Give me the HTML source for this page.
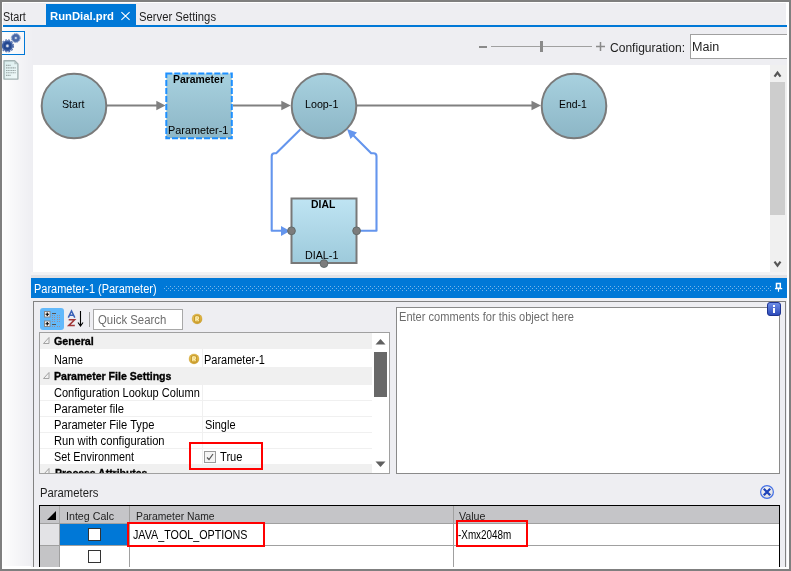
<!DOCTYPE html>
<html><head><meta charset="utf-8"><style>
html,body{margin:0;padding:0;width:791px;height:571px;overflow:hidden;position:relative;background:#7f7f7f;}
.r,.t{position:absolute;}
.t{white-space:nowrap;font-family:"Liberation Sans", sans-serif;}
svg text{font-family:"Liberation Sans",sans-serif;}
</style></head><body>
<div class="r" style="left:0px;top:0px;width:791px;height:571px;background:#7f7f7f;"></div>
<div class="r" style="left:2px;top:2px;width:787px;height:567px;background:#ffffff;"></div>
<div class="r" style="left:3px;top:3px;width:783px;height:22px;background:#eeeef2;"></div>
<div class="r" style="left:3px;top:25px;width:784px;height:2px;background:#0078d7;"></div>
<div class="t" style="left:2.92px;top:11.09px;font-size:12.00px;line-height:12.00px;color:#1e1e1e;transform-origin:0 0;transform:scaleX(0.9006);">Start</div>
<div class="r" style="left:46px;top:4px;width:90px;height:21px;background:#0078d7;"></div>
<div class="t" style="left:50.26px;top:11.26px;font-size:11.80px;line-height:11.80px;color:#fff;transform-origin:0 0;transform:scaleX(0.9574);font-weight:bold;">RunDial.prd</div>
<svg class="r" style="left:119px;top:10px" width="13" height="12" viewBox="119 10 13 12"><path d="M121.4 12.2L129.6 19.9M129.6 12.2L121.4 19.9" stroke="#fff" stroke-width="1.15"/></svg>
<div class="t" style="left:139.00px;top:11.09px;font-size:12.00px;line-height:12.00px;color:#1e1e1e;transform-origin:0 0;transform:scaleX(0.9387);">Server Settings</div>
<div class="r" style="left:3px;top:27px;width:30px;height:539px;background:linear-gradient(to right,#fdfdfd,#eeeef2);"></div>
<div class="r" style="left:2px;top:31px;width:23px;height:24px;border:1px solid #0078d7;border-left:none;box-sizing:border-box;background:rgba(255,255,255,0.25);"></div>
<svg class="r" style="left:2px;top:31px" width="23" height="24" viewBox="2 31 23 24">
<defs><filter id="gb" x="-20%" y="-20%" width="140%" height="140%"><feGaussianBlur stdDeviation="0.5"/></filter></defs>
<g filter="url(#gb)">
<circle cx="15.8" cy="38" r="4.2" fill="#5a78b4"/>
<circle cx="15.8" cy="38" r="4.5" fill="none" stroke="#5a78b4" stroke-width="0.9" stroke-dasharray="1.4 0.95" opacity="0.85"/>
<circle cx="15.8" cy="38" r="2.6" fill="none" stroke="#4866a6" stroke-width="1.2"/>
<circle cx="15.8" cy="38" r="1.1" fill="#d4dcec"/>
<circle cx="7.4" cy="45.9" r="5.6" fill="#3e5fa4"/>
<circle cx="7.4" cy="45.9" r="6.1" fill="none" stroke="#3e5fa4" stroke-width="1.1" stroke-dasharray="2 1.2" opacity="0.85"/>
<circle cx="7.4" cy="45.9" r="3" fill="none" stroke="#24468e" stroke-width="1.6"/>
<circle cx="7.4" cy="45.9" r="1.3" fill="#dde4f0"/>
</g>
</svg>
<svg class="r" style="left:2px;top:58px" width="19" height="24" viewBox="2 58 19 24">
<defs><linearGradient id="dg" x1="0" y1="0" x2="1" y2="1"><stop offset="0" stop-color="#d6ecec"/><stop offset="1" stop-color="#f2fafa"/></linearGradient></defs>
<path d="M4 60.7H14.6L17.9 64V79.1H4Z" fill="url(#dg)" stroke="#a3b3b3" stroke-width="1.4" stroke-linejoin="round"/>
<path d="M14.3 60.9V64.3H17.7Z" fill="#b8c6c6"/>
<g stroke="#9aa6a6" stroke-width="1.1" stroke-dasharray="1.2 0.5"><path d="M6 65.4H11M6 67.9H15.7M6 70.5H15.7M6 72.8H15.7M6 75.4H11"/></g>
</svg>
<div class="r" style="left:33px;top:27px;width:754px;height:38px;background:#eeeef2;"></div>
<div class="r" style="left:479px;top:46px;width:8px;height:2px;background:#8a8a8a;"></div>
<div class="r" style="left:491px;top:46px;width:101px;height:1px;background:#a0a0a0;"></div>
<div class="r" style="left:540px;top:41px;width:3px;height:11px;background:#8a8a8a;"></div>
<svg class="r" style="left:596px;top:42px" width="9" height="9"><path d="M0 4.5H9M4.5 0V9" stroke="#8a8a8a" stroke-width="1.5"/></svg>
<div class="t" style="left:610.48px;top:42.09px;font-size:12.00px;line-height:12.00px;color:#1e1e1e;transform-origin:0 0;transform:scaleX(1.0042);">Configuration:</div>
<div class="r" style="left:690px;top:34px;width:97px;height:25px;background:#fff;border:1px solid #a0a0a0;border-right:none;box-sizing:border-box;"></div>
<div class="t" style="left:692.42px;top:41.09px;font-size:12.00px;line-height:12.00px;color:#1e1e1e;transform-origin:0 0;transform:scaleX(1.0456);">Main</div>
<div class="r" style="left:33px;top:65px;width:737px;height:207px;background:#fff;"></div>
<div class="r" style="left:770px;top:65px;width:17px;height:207px;background:#f0f0f0;"></div>
<div class="r" style="left:770px;top:82px;width:15px;height:133px;background:#cdcdcd;"></div>
<svg class="r" style="left:772px;top:69px" width="11" height="10"><path d="M2.5 7.7L5.5 3.7L8.5 7.7" fill="none" stroke="#555" stroke-width="2.2" stroke-linejoin="miter"/></svg>
<svg class="r" style="left:772px;top:259px" width="11" height="10"><path d="M2.5 2.6L5.5 6.6L8.5 2.6" fill="none" stroke="#555" stroke-width="2.2" stroke-linejoin="miter"/></svg>
<svg class="r" style="left:0;top:0" width="791" height="571">
<defs>
<linearGradient id="gc" x1="0" y1="0" x2="0" y2="1"><stop offset="0" stop-color="#a8d1df"/><stop offset="1" stop-color="#8cb6c6"/></linearGradient>
<linearGradient id="gd" x1="0" y1="0" x2="0" y2="1"><stop offset="0" stop-color="#bfe4f3"/><stop offset="1" stop-color="#9dcadb"/></linearGradient>
</defs>
<g stroke="#808080" stroke-width="2" fill="none">
<path d="M106 105.5H157"/><path d="M233 105.5H282"/><path d="M356 105.5H532"/>
</g>
<g fill="#808080">
<path d="M156.3 100.7L165.5 105.5L156.3 110.3Z"/><path d="M281.3 100.7L290.8 105.5L281.3 110.3Z"/><path d="M531.5 100.7L541 105.5L531.5 110.3Z"/>
</g>
<circle cx="74" cy="106" r="32.3" fill="url(#gc)" stroke="#7a7a7a" stroke-width="2"/>
<circle cx="324" cy="106" r="32.3" fill="url(#gc)" stroke="#7a7a7a" stroke-width="2"/>
<circle cx="574" cy="106" r="32.3" fill="url(#gc)" stroke="#7a7a7a" stroke-width="2"/>
<rect x="166.3" y="73.5" width="65.5" height="64.7" fill="url(#gc)" stroke="#1e90ff" stroke-width="2" stroke-dasharray="6 2"/>
<g stroke="#6495ed" stroke-width="2.1" fill="none" stroke-linejoin="round">
<path d="M300.3 129.5L276.2 153.2H274.7Q271.7 153.2 271.7 156.2V230.8H283"/>
<path d="M357 230.8H376.5V156.2Q376.5 153.2 373.5 153.2H371.2L352 134"/>
</g>
<g fill="#6495ed">
<path d="M281 226L290 231L281 236Z"/>
<path d="M347 129L357 132.5L350.5 139Z"/>
</g>
<rect x="291.5" y="198.5" width="65" height="64.5" fill="url(#gd)" stroke="#787878" stroke-width="2"/>
<g fill="#7c7c7c" stroke="#5c6666" stroke-width="0.9"><circle cx="291.5" cy="230.8" r="3.9"/><circle cx="356.6" cy="230.8" r="3.9"/><circle cx="324" cy="263.6" r="3.9"/></g>
</svg>
<div class="t" style="left:61.98px;top:98.77px;font-size:11.20px;line-height:11.20px;color:#000;transform-origin:0 0;transform:scaleX(0.9505);">Start</div>
<div class="t" style="left:305.18px;top:98.77px;font-size:11.20px;line-height:11.20px;color:#000;transform-origin:0 0;transform:scaleX(0.9576);">Loop-1</div>
<div class="t" style="left:558.70px;top:98.77px;font-size:11.20px;line-height:11.20px;color:#000;transform-origin:0 0;transform:scaleX(0.9314);">End-1</div>
<div class="t" style="left:172.76px;top:73.77px;font-size:11.20px;line-height:11.20px;color:#000;transform-origin:0 0;transform:scaleX(0.9306);font-weight:bold;">Parameter</div>
<div class="t" style="left:167.96px;top:124.77px;font-size:11.20px;line-height:11.20px;color:#000;transform-origin:0 0;transform:scaleX(0.9698);">Parameter-1</div>
<div class="t" style="left:311.02px;top:198.77px;font-size:11.20px;line-height:11.20px;color:#000;transform-origin:0 0;transform:scaleX(0.9281);font-weight:bold;">DIAL</div>
<div class="t" style="left:305.18px;top:249.77px;font-size:11.20px;line-height:11.20px;color:#000;transform-origin:0 0;transform:scaleX(0.9582);">DIAL-1</div>
<div class="r" style="left:31px;top:272px;width:756px;height:295px;background:#eeeef2;"></div>
<div class="r" style="left:31px;top:272px;width:756px;height:3px;background:#f2f2f4;"></div>
<div class="r" style="left:31px;top:275px;width:756px;height:3px;background:#e2e2e6;"></div>
<div class="r" style="left:31px;top:278px;width:756px;height:20px;background:#0078d7;"></div>
<div class="t" style="left:33.94px;top:283.09px;font-size:12.00px;line-height:12.00px;color:#fff;transform-origin:0 0;transform:scaleX(0.9145);">Parameter-1 (Parameter)</div>
<svg class="r" style="left:164px;top:286px" width="608" height="5"><defs><pattern id="dots" width="4" height="4" patternUnits="userSpaceOnUse"><rect x="2" y="0" width="1" height="1" fill="#7ab6ea"/><rect x="0" y="2" width="1" height="1" fill="#7ab6ea"/></pattern></defs><rect width="608" height="5" fill="url(#dots)"/></svg>
<svg class="r" style="left:774px;top:282px" width="10" height="11" viewBox="774 282 10 11"><path d="M776.5 283.5H780.3V288.3H776.5Z" fill="none" stroke="#fff" stroke-width="1.5"/><path d="M775 288.6H782.2" stroke="#fff" stroke-width="1.3"/><path d="M778.5 289V291.8" stroke="#fff" stroke-width="1.1"/></svg>
<div class="r" style="left:33px;top:301px;width:753px;height:266px;border:1px solid #828282;border-bottom:none;box-sizing:border-box;background:#eeeef2;"></div>
<div class="r" style="left:40px;top:308px;width:24px;height:22px;background:#63b9fb;border-radius:3px;"></div>
<svg class="r" style="left:40px;top:308px" width="24" height="22" viewBox="40 308 24 22">
<rect x="44.5" y="311.5" width="5.5" height="5.5" fill="#f4f4f4" stroke="#8a8a8a" stroke-width="1"/>
<rect x="44.5" y="321" width="5.5" height="5.5" fill="#f4f4f4" stroke="#8a8a8a" stroke-width="1"/>
<path d="M45.5 314.25H49M47.25 312.5V316M45.5 323.75H49M47.25 322V325.5" stroke="#000" stroke-width="1.2"/>
<path d="M52 313.5H56M52 324.5H56" stroke="#555" stroke-width="1"/>
<g stroke="#a08c8c" stroke-width="0.9" stroke-dasharray="1 1"><path d="M52 315.5H56M57 315.5H60M52 317.5H56M57 317.5H60M52 319.5H56M57 319.5H60M52 321.5H56M57 321.5H60M52 326.5H56M57 326.5H60"/></g>
</svg>
<svg class="r" style="left:66px;top:309px" width="20" height="20" viewBox="66 309 20 20">
<path d="M68.3 317.6L71.5 311L74.8 317.6M69.5 315.3H73.5" fill="none" stroke="#3a62b8" stroke-width="1.5"/>
<path d="M68.7 319.8H74.6L68.7 325.6H74.8" fill="none" stroke="#a23838" stroke-width="1.5"/>
<path d="M80.5 311V325.5M78 322.5L80.5 326L83 322.5" fill="none" stroke="#000" stroke-width="1.1"/>
</svg>
<div class="r" style="left:89px;top:312px;width:1px;height:15px;background:#a0a0a0;"></div>
<div class="r" style="left:93px;top:309px;width:90px;height:21px;background:#fff;border:1px solid #a8a8a8;box-sizing:border-box;"></div>
<div class="t" style="left:97.76px;top:314.09px;font-size:12.00px;line-height:12.00px;color:#6d6d6d;transform-origin:0 0;transform:scaleX(0.9484);">Quick Search</div>
<svg class="r" style="left:191px;top:312px" width="13" height="13" viewBox="191 312 13 13">
<defs><radialGradient id="gold191" cx="0.45" cy="0.4" r="0.65"><stop offset="0" stop-color="#f3d36a"/><stop offset="0.75" stop-color="#dcb03c"/><stop offset="1" stop-color="#c39526"/></radialGradient></defs>
<circle cx="197.1" cy="318.9" r="5" fill="url(#gold191)"/>
<circle cx="197.1" cy="318.9" r="4.9" fill="none" stroke="#c9a035" stroke-width="0.4"/>
<rect x="194.5" y="315.7" width="5.2" height="6.4" rx="1.2" fill="#e9c45a" stroke="#b88a22" stroke-width="0.8"/>
<path d="M195.9 320.9V316.9H197.5A1.1 1.1 0 0 1 197.5 319.09999999999997H195.9M197.2 319.09999999999997L198.5 320.9" fill="none" stroke="#fff4c0" stroke-width="1"/>
</svg>
<div class="r" style="left:39px;top:332px;width:351px;height:142px;background:#fff;border:1px solid #a0a0a0;box-sizing:border-box;"></div>
<div class="r" style="left:40px;top:333px;width:332px;height:16px;background:#f0f0f0;"></div>
<svg class="r" style="left:43px;top:337px" width="7" height="7"><path d="M6 0.5V6.5H0.5Z" fill="none" stroke="#9a9a9a" stroke-width="0.9"/></svg>
<div class="t" style="left:54.00px;top:335.43px;font-size:11.60px;line-height:11.60px;color:#000;transform-origin:0 0;transform:scaleX(0.9210);font-weight:bold;-webkit-text-stroke:0.35px #000;">General</div>
<div class="r" style="left:40px;top:349px;width:332px;height:19px;background:#fff;"></div>
<div class="r" style="left:40px;top:367px;width:332px;height:1px;background:#f0f0f0;"></div>
<div class="r" style="left:202px;top:349px;width:1px;height:19px;background:#f0f0f0;"></div>
<div class="t" style="left:53.70px;top:354.09px;font-size:12.00px;line-height:12.00px;color:#000;transform-origin:0 0;transform:scaleX(0.9086);">Name</div>
<div class="r" style="left:40px;top:368px;width:332px;height:17px;background:#f0f0f0;"></div>
<svg class="r" style="left:43px;top:372px" width="7" height="7"><path d="M6 0.5V6.5H0.5Z" fill="none" stroke="#9a9a9a" stroke-width="0.9"/></svg>
<div class="t" style="left:54.00px;top:370.43px;font-size:11.60px;line-height:11.60px;color:#000;transform-origin:0 0;transform:scaleX(0.9113);font-weight:bold;-webkit-text-stroke:0.35px #000;">Parameter File Settings</div>
<div class="r" style="left:40px;top:385px;width:332px;height:16px;background:#fff;"></div>
<div class="r" style="left:40px;top:400px;width:332px;height:1px;background:#f0f0f0;"></div>
<div class="r" style="left:202px;top:385px;width:1px;height:16px;background:#f0f0f0;"></div>
<div class="t" style="left:53.70px;top:387.09px;font-size:12.00px;line-height:12.00px;color:#000;transform-origin:0 0;transform:scaleX(0.9182);">Configuration Lookup Column</div>
<div class="r" style="left:40px;top:401px;width:332px;height:16px;background:#fff;"></div>
<div class="r" style="left:40px;top:416px;width:332px;height:1px;background:#f0f0f0;"></div>
<div class="r" style="left:202px;top:401px;width:1px;height:16px;background:#f0f0f0;"></div>
<div class="t" style="left:53.70px;top:403.09px;font-size:12.00px;line-height:12.00px;color:#000;transform-origin:0 0;transform:scaleX(0.9354);">Parameter file</div>
<div class="r" style="left:40px;top:417px;width:332px;height:16px;background:#fff;"></div>
<div class="r" style="left:40px;top:432px;width:332px;height:1px;background:#f0f0f0;"></div>
<div class="r" style="left:202px;top:417px;width:1px;height:16px;background:#f0f0f0;"></div>
<div class="t" style="left:53.70px;top:419.09px;font-size:12.00px;line-height:12.00px;color:#000;transform-origin:0 0;transform:scaleX(0.9306);">Parameter File Type</div>
<div class="r" style="left:40px;top:433px;width:332px;height:16px;background:#fff;"></div>
<div class="r" style="left:40px;top:448px;width:332px;height:1px;background:#f0f0f0;"></div>
<div class="r" style="left:202px;top:433px;width:1px;height:16px;background:#f0f0f0;"></div>
<div class="t" style="left:53.70px;top:435.09px;font-size:12.00px;line-height:12.00px;color:#000;transform-origin:0 0;transform:scaleX(0.9314);">Run with configuration</div>
<div class="r" style="left:40px;top:449px;width:332px;height:16px;background:#fff;"></div>
<div class="r" style="left:40px;top:464px;width:332px;height:1px;background:#f0f0f0;"></div>
<div class="r" style="left:202px;top:449px;width:1px;height:16px;background:#f0f0f0;"></div>
<div class="t" style="left:53.70px;top:451.09px;font-size:12.00px;line-height:12.00px;color:#000;transform-origin:0 0;transform:scaleX(0.9014);">Set Environment</div>
<div class="r" style="left:40px;top:465px;width:332px;height:8px;background:#f0f0f0;"></div>
<div class="r" style="left:40px;top:465px;width:332px;height:8px;overflow:hidden;"><svg class="r" style="left:3px;top:3px" width="7" height="7"><path d="M6 0.5V6.5H0.5Z" fill="none" stroke="#9a9a9a" stroke-width="0.9"/></svg><div class="t" style="left:14.9px;top:2.4px;font-size:11.6px;line-height:11.6px;font-weight:bold;-webkit-text-stroke:0.35px #000;transform-origin:0 0;transform:scaleX(0.9);">Process Attributes</div></div>
<svg class="r" style="left:188px;top:352px" width="13" height="13" viewBox="188 352 13 13">
<defs><radialGradient id="gold188" cx="0.45" cy="0.4" r="0.65"><stop offset="0" stop-color="#f3d36a"/><stop offset="0.75" stop-color="#dcb03c"/><stop offset="1" stop-color="#c39526"/></radialGradient></defs>
<circle cx="194" cy="358.9" r="5" fill="url(#gold188)"/>
<circle cx="194" cy="358.9" r="4.9" fill="none" stroke="#c9a035" stroke-width="0.4"/>
<rect x="191.4" y="355.7" width="5.2" height="6.4" rx="1.2" fill="#e9c45a" stroke="#b88a22" stroke-width="0.8"/>
<path d="M192.8 360.9V356.9H194.4A1.1 1.1 0 0 1 194.4 359.09999999999997H192.8M194.1 359.09999999999997L195.4 360.9" fill="none" stroke="#fff4c0" stroke-width="1"/>
</svg>
<div class="t" style="left:203.70px;top:354.09px;font-size:12.00px;line-height:12.00px;color:#000;transform-origin:0 0;transform:scaleX(0.9127);">Parameter-1</div>
<div class="t" style="left:204.52px;top:419.09px;font-size:12.00px;line-height:12.00px;color:#000;transform-origin:0 0;transform:scaleX(0.9138);">Single</div>
<div class="r" style="left:204px;top:451px;width:12px;height:12px;background:#f4f4f4;border:1px solid #9a9a9a;box-sizing:border-box;"></div>
<svg class="r" style="left:204px;top:451px" width="12" height="12"><path d="M3 6.5L5 8.5L9 3" fill="none" stroke="#555" stroke-width="1.2"/></svg>
<div class="t" style="left:220.26px;top:451.09px;font-size:12.00px;line-height:12.00px;color:#000;transform-origin:0 0;transform:scaleX(0.9280);">True</div>
<div class="r" style="left:372px;top:333px;width:17px;height:140px;background:#fff;"></div>
<svg class="r" style="left:375px;top:338px" width="11" height="7"><path d="M0.5 6.5L5.5 1L10.5 6.5Z" fill="#606060"/></svg>
<div class="r" style="left:374px;top:352px;width:13px;height:45px;background:#686868;"></div>
<svg class="r" style="left:375px;top:461px" width="11" height="7"><path d="M0.5 0.5L5.5 6L10.5 0.5Z" fill="#606060"/></svg>
<div class="r" style="left:189px;top:442px;width:74px;height:28px;border:2px solid #ff0000;box-sizing:border-box;"></div>
<div class="r" style="left:396px;top:307px;width:384px;height:167px;background:#fff;border:1px solid #8a8a8a;box-sizing:border-box;"></div>
<div class="t" style="left:399.18px;top:311.09px;font-size:12.00px;line-height:12.00px;color:#6d6d6d;transform-origin:0 0;transform:scaleX(0.9230);">Enter comments for this object here</div>
<svg class="r" style="left:767px;top:302px" width="14" height="14" viewBox="0 0 14 14">
<defs><linearGradient id="ib" x1="0" y1="0" x2="0" y2="1"><stop offset="0" stop-color="#6f8fe8"/><stop offset="1" stop-color="#2a48b8"/></linearGradient></defs>
<rect x="0.5" y="0.5" width="13" height="13" rx="2.5" fill="url(#ib)" stroke="#1e3490" stroke-width="1"/>
<rect x="6" y="3" width="2" height="2" fill="#fff"/><rect x="6" y="6" width="2" height="5" fill="#fff"/>
</svg>
<div class="t" style="left:39.68px;top:486.84px;font-size:12.30px;line-height:12.30px;color:#1e1e1e;transform-origin:0 0;transform:scaleX(0.9177);">Parameters</div>
<svg class="r" style="left:760px;top:485px" width="14" height="14" viewBox="0 0 14 14">
<defs><radialGradient id="cg" cx="0.45" cy="0.4" r="0.6"><stop offset="0" stop-color="#ffffff"/><stop offset="1" stop-color="#dcdcdc"/></radialGradient></defs>
<circle cx="7" cy="7" r="6.4" fill="url(#cg)" stroke="#4470e6" stroke-width="1.2"/>
<path d="M3.8 3.8L10.2 10.2M10.2 3.8L3.8 10.2" stroke="#1e42b8" stroke-width="2.3"/>
</svg>
<div class="r" style="left:39px;top:505px;width:741px;height:62px;background:#fff;border:1px solid #000;border-bottom:none;box-sizing:border-box;"></div>
<div class="r" style="left:40px;top:506px;width:739px;height:17px;background:#c5c5c8;"></div>
<div class="r" style="left:59px;top:506px;width:1px;height:17px;background:#a8a8a8;"></div>
<div class="r" style="left:129px;top:506px;width:1px;height:61px;background:#a0a0a0;"></div>
<div class="r" style="left:453px;top:506px;width:1px;height:61px;background:#a0a0a0;"></div>
<svg class="r" style="left:46px;top:510px" width="11" height="11"><path d="M10 1V10H1Z" fill="#000"/></svg>
<div class="t" style="left:65.70px;top:510.77px;font-size:11.20px;line-height:11.20px;color:#1e1e1e;transform-origin:0 0;transform:scaleX(0.9536);">Integ Calc</div>
<div class="t" style="left:135.70px;top:510.77px;font-size:11.20px;line-height:11.20px;color:#1e1e1e;transform-origin:0 0;transform:scaleX(0.9215);">Parameter Name</div>
<div class="t" style="left:459.48px;top:510.77px;font-size:11.20px;line-height:11.20px;color:#1e1e1e;transform-origin:0 0;transform:scaleX(0.9532);">Value</div>
<div class="r" style="left:40px;top:523px;width:739px;height:1px;background:#a0a0a0;"></div>
<div class="r" style="left:40px;top:524px;width:19px;height:21px;background:#e3e3e6;"></div>
<div class="r" style="left:60px;top:524px;width:69px;height:21px;background:#0078d7;"></div>
<div class="r" style="left:88px;top:528px;width:13px;height:13px;background:#fff;border:1px solid #333;box-sizing:border-box;"></div>
<div class="t" style="left:132.74px;top:529.09px;font-size:12.00px;line-height:12.00px;color:#000;transform-origin:0 0;transform:scaleX(0.8944);">JAVA_TOOL_OPTIONS</div>
<div class="t" style="left:457.74px;top:529.09px;font-size:12.00px;line-height:12.00px;color:#000;transform-origin:0 0;transform:scaleX(0.8231);">-Xmx2048m</div>
<div class="r" style="left:40px;top:545px;width:739px;height:1px;background:#a0a0a0;"></div>
<div class="r" style="left:40px;top:546px;width:19px;height:21px;background:#c4c4c6;"></div>
<div class="r" style="left:59px;top:524px;width:1px;height:43px;background:#a0a0a0;"></div>
<div class="r" style="left:88px;top:550px;width:13px;height:13px;background:#fff;border:1px solid #333;box-sizing:border-box;"></div>
<div class="r" style="left:127px;top:522px;width:138px;height:25px;border:2px solid #ff0000;box-sizing:border-box;"></div>
<div class="r" style="left:456px;top:520px;width:72px;height:27px;border:2px solid #ff0000;box-sizing:border-box;"></div>
</body></html>
